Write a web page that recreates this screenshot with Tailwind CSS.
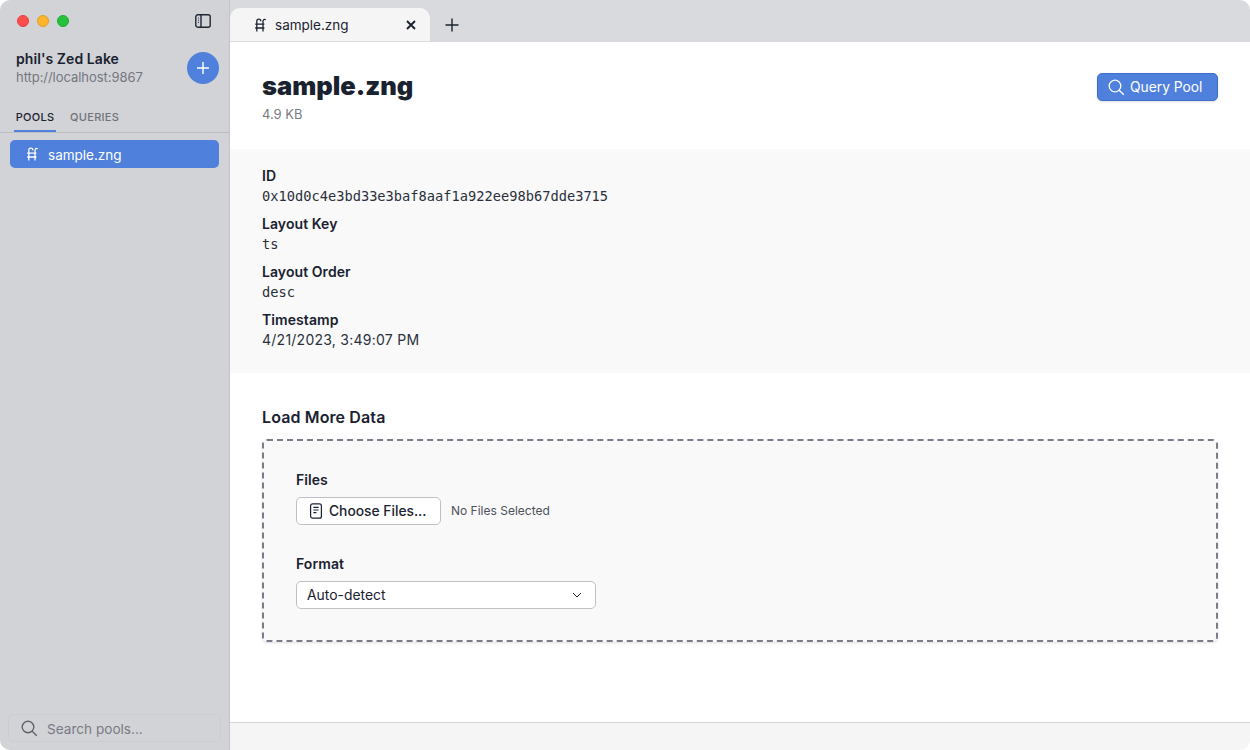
<html>
<head>
    <title>Zed Lake</title>
    <script src="https://cdn.jsdelivr.net/npm/@tailwindcss/browser@4"></script>
</head>
<body class="bg-white overflow-hidden font-['Inter',sans-serif] text-[#1a2230]">
    <div class="w-[1250px] h-[750px] flex rounded-[10px] overflow-hidden">
        <!-- sidebar -->
        <aside class="w-[230px] h-full shrink-0 bg-[#d2d3d7] border-r border-[#c3c4c8] flex flex-col">
            <div class="h-[42px] flex items-center justify-between pl-[17px] pr-[18px]">
                <div class="flex gap-[8px]">
                    <span class="w-3 h-3 rounded-full bg-[#fb4d4c] border border-[#e5413f]"></span>
                    <span class="w-3 h-3 rounded-full bg-[#fdb42c] border border-[#e29f24]"></span>
                    <span class="w-3 h-3 rounded-full bg-[#27c13c] border border-[#20ab33]"></span>
                </div>
                <svg width="16" height="14" viewBox="0 0 16 14" fill="none" stroke="#1f2733" stroke-width="1.4">
                    <rect x="0.8" y="0.8" width="14.4" height="12.4" rx="2"/>
                    <path d="M6 1v12"/>
                    <path d="M3 4h0.8M3 6.2h0.8M3 8.4h0.8" stroke-width="1.2"/>
                </svg>
            </div>
            <div class="h-[48px] pt-[4px] flex items-center justify-between pl-[16px] pr-[10px]">
                <div>
                    <div class="text-[14px] leading-[19px] font-semibold tracking-[0.07px]">phil's Zed Lake</div>
                    <div class="text-[13px] leading-[19px] text-[#74777f] tracking-[-0.05px]">http://localhost:9867</div>
                </div>
                <div class="w-8 h-8 rounded-full bg-[#4f81dc] flex items-center justify-center">
                    <svg width="14" height="14" viewBox="0 0 14 14" stroke="#fff" stroke-width="1.4"><path d="M7 1v12M1 7h12"/></svg>
                </div>
            </div>
            <div class="h-[43px] border-b border-[#bdbec3] flex items-end pl-[14px] gap-[14px] text-[11px] font-medium tracking-[0.3px]">
                <div class="w-[42px] h-[27px] pt-[5px] text-center leading-[14px] border-b-2 border-[#4f81dc]">POOLS</div>
                <div class="h-[27px] pt-[5px] leading-[14px] text-[#6f7278]">QUERIES</div>
            </div>
            <div class="mx-[10px] mt-[7px] h-[28px] rounded-[5px] bg-[#4f81dc] text-white flex items-center pl-[16px] gap-[10px] text-[13.5px]">
                <svg width="12" height="14" viewBox="0 0 12 14" fill="none" stroke="#fff" stroke-width="1.3"><path d="M2.8 13.5V3.2a2 2 0 0 1 4 0M9 13.5V3a1.7 1.7 0 0 1 2.8-1.2M1.2 6.2h9.2M1.2 10h9.2"/></svg>
                <span class="mt-[2px]">sample.zng</span>
            </div>
            <div class="mt-auto mb-[8px] mx-[8px] h-[28px] rounded-[5px] border border-[#cccdd1] flex items-center pl-[12px] gap-[9px] text-[13.6px] text-[#787b82]">
                <svg width="17" height="17" viewBox="0 0 17 17" fill="none" stroke="#5f636b" stroke-width="1.4"><circle cx="7" cy="7" r="5.8"/><path d="M11.2 11.2l4.6 4.6"/></svg>
                <span class="mt-[2px]">Search pools...</span>
            </div>
        </aside>
        <!-- main -->
        <main class="flex-1 flex flex-col min-w-0">
            <div class="h-[42px] bg-[#d9dade] flex items-end pt-[8px] shrink-0">
                <div class="w-[200px] h-[34px] pt-[1px] bg-[#f5f5f6] rounded-t-[10px] border-b border-[#dcdcdf] flex items-center pl-[24px] pr-[14px] text-[13.5px]">
                    <svg width="12" height="14" viewBox="0 0 12 14" fill="none" stroke="#1a2230" stroke-width="1.3"><path d="M2.8 13.5V3.2a2 2 0 0 1 4 0M9 13.5V3a1.7 1.7 0 0 1 2.8-1.2M1.2 6.2h9.2M1.2 10h9.2"/></svg>
                    <span class="ml-[9px]">sample.zng</span>
                    <svg class="ml-auto" width="10" height="10" viewBox="0 0 10 10" stroke="#1a2230" stroke-width="1.9"><path d="M1 1l8 8M9 1l-8 8"/></svg>
                </div>
                <div class="w-[44px] h-[34px] flex items-center justify-center">
                    <svg width="14" height="14" viewBox="0 0 14 14" stroke="#1a2230" stroke-width="1.4"><path d="M7 0.5v13M0.5 7h13"/></svg>
                </div>
            </div>
            <div class="flex-1 min-h-0 flex flex-col">
                <div class="h-[107px] px-[32px] flex items-start justify-between">
                    <div class="pt-[26px]">
                        <h1 class="text-[25.5px] leading-[36px] font-black">sample.zng</h1>
                        <div class="text-[13px] leading-[20px] text-[#777b83]">4.9 KB</div>
                    </div>
                    <button class="mt-[31px] w-[121px] h-[28px] rounded-[5px] bg-[#4f81dc] border border-[#3f6fcb] shadow-sm text-white text-[13.8px] flex items-center pl-[10px] gap-[5px]">
                        <svg width="17" height="17" viewBox="0 0 17 17" fill="none" stroke="#fff" stroke-width="1.3"><circle cx="7" cy="7" r="5.8"/><path d="M11.2 11.2l4.6 4.6"/></svg>
                        <span>Query Pool</span>
                    </button>
                </div>
                <div class="h-[224px] bg-[#f9f9f9] px-[32px] pt-[17px] flex flex-col gap-[8px]">
                    <div>
                        <div class="text-[14px] leading-[20px] font-semibold tracking-[0.07px]">ID</div>
                        <div class="font-['DejaVu_Sans_Mono',monospace] text-[13.7px] leading-[20px] text-[#2a303b]">0x10d0c4e3bd33e3baf8aaf1a922ee98b67dde3715</div>
                    </div>
                    <div>
                        <div class="text-[14px] leading-[20px] font-semibold tracking-[0.07px]">Layout Key</div>
                        <div class="font-['DejaVu_Sans_Mono',monospace] text-[13.7px] leading-[20px] text-[#2a303b]">ts</div>
                    </div>
                    <div>
                        <div class="text-[14px] leading-[20px] font-semibold tracking-[0.07px]">Layout Order</div>
                        <div class="font-['DejaVu_Sans_Mono',monospace] text-[13.7px] leading-[20px] text-[#2a303b]">desc</div>
                    </div>
                    <div>
                        <div class="text-[14px] leading-[20px] font-semibold tracking-[0.07px]">Timestamp</div>
                        <div class="text-[14px] leading-[20px] text-[#2a303b] tracking-[0.25px]">4/21/2023, 3:49:07 PM</div>
                    </div>
                </div>
                <div class="px-[32px] pt-[32px]">
                    <h2 class="text-[16px] leading-[24px] font-semibold tracking-[0.12px]">Load More Data</h2>
                    <div class="mt-[10px] h-[203px] rounded-[5px] border-2 border-dashed border-[#7a7d88] bg-[#f9f9f9] pl-[32px] pt-[29px] shadow-sm">
                        <div class="text-[14px] leading-[20px] font-semibold tracking-[0.07px]">Files</div>
                        <div class="mt-[7px] flex items-center">
                            <div class="w-[145px] h-[28px] rounded-[5px] border border-[#bfc0c4] bg-white flex items-center pl-[12px] gap-[6px] text-[13.8px] font-medium">
                                <svg width="14" height="16" viewBox="0 0 14 16" fill="none" stroke="#1a2230" stroke-width="1.2"><rect x="1.6" y="0.8" width="10.8" height="14.4" rx="2"/><path d="M4.4 4.4h5.2M4.4 7h5.2M4.4 9.6h3"/></svg>
                                <span>Choose Files...</span>
                            </div>
                            <span class="ml-[10px] text-[12px] text-[#4d5159]">No Files Selected</span>
                        </div>
                        <div class="mt-[29px] text-[14px] leading-[20px] font-semibold tracking-[0.07px]">Format</div>
                        <div class="mt-[7px] w-[300px] h-[28px] rounded-[5px] border border-[#bfc0c4] bg-white flex items-center justify-between pl-[10px] pr-[13px] text-[13.9px]">
                            <span>Auto-detect</span>
                            <svg width="10" height="6" viewBox="0 0 10 6" fill="none" stroke="#1a2230" stroke-width="1"><path d="M1 1l4 4 4-4"/></svg>
                        </div>
                    </div>
                </div>
                <div class="mt-auto h-[28px] bg-[#f5f5f5] border-t border-[#d5d6da]"></div>
            </div>
        </main>
    </div>
</body>
</html>
